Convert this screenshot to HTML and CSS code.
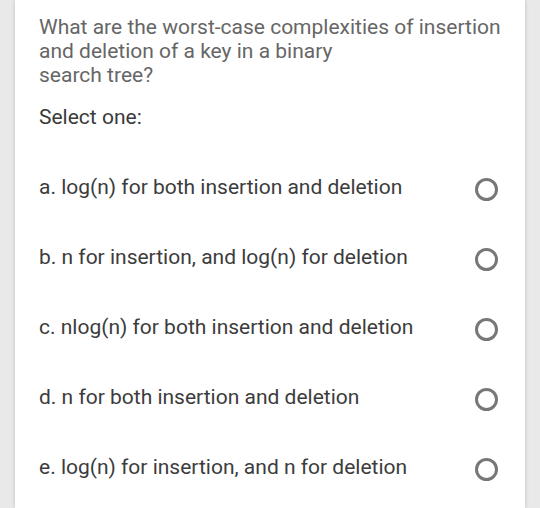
FILE: index.html
```html
<!DOCTYPE html>
<html>
<head>
<meta charset="utf-8">
<link rel="stylesheet" href="styles.css">
</head>
<body>
<div class="card">
  <div class="question">What are the worst-case complexities of insertion and deletion of a key in a binary<br>search tree?</div>
  <div class="prompt">Select one:</div>
  <div class="options">
    <div class="option"><span class="label">a. log(n) for both insertion and deletion</span><span class="radio"></span></div>
    <div class="option"><span class="label">b. n for insertion, and log(n) for deletion</span><span class="radio"></span></div>
    <div class="option"><span class="label">c. nlog(n) for both insertion and deletion</span><span class="radio"></span></div>
    <div class="option"><span class="label">d. n for both insertion and deletion</span><span class="radio"></span></div>
    <div class="option"><span class="label">e. log(n) for insertion, and n for deletion</span><span class="radio"></span></div>
  </div>
</div>
</body>
</html>
```
FILE: styles.css
```css
html, body {
  margin: 0;
  padding: 0;
  height: 100%;
  overflow: hidden;
}
body {
  background: #e9e9e9;
  font-family: Roboto, "Liberation Sans", sans-serif;
}
.card {
  margin: 0 15px;
  min-height: 100%;
  background: #fff;
  box-shadow: 0 0 4px rgba(0,0,0,0.18);
  padding: 15px 24px 0 24px;
  box-sizing: border-box;
}
.question {
  font-size: 21px;
  line-height: 24px;
  color: #666;
  width: 472px;
}
.prompt {
  margin-top: 18px;
  font-size: 21px;
  line-height: 24px;
  color: #3a3a3a;
}
.options {
  margin-top: 23px;
  display: flex;
  flex-direction: column;
}
.option {
  height: 70px;
  display: flex;
  align-items: center;
  justify-content: space-between;
  font-size: 21px;
  color: #3c3c3c;
}
.radio {
  width: 17px;
  height: 17px;
  border: 3px solid #777;
  border-radius: 50%;
  margin-right: 3px;
  margin-top: 4px;
}
```
